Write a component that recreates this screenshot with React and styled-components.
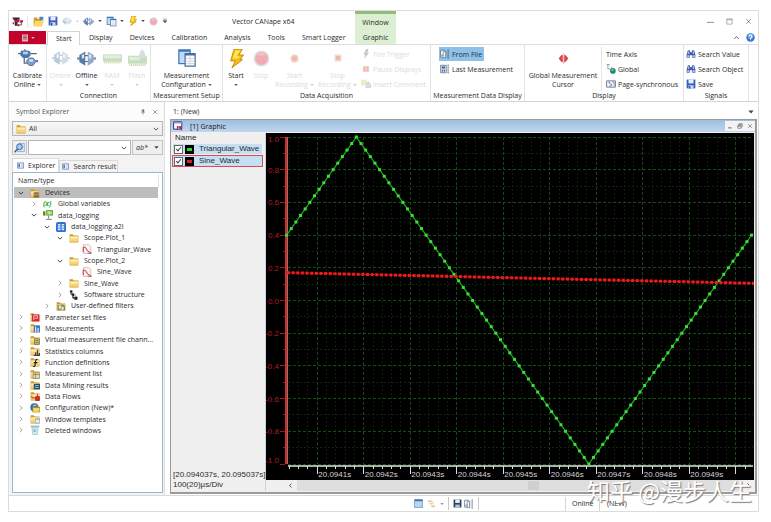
import React, { useLayoutEffect, useRef, useState } from 'react';
import styled, { createGlobalStyle, css } from 'styled-components';

const UI = '"Open Sans", "Noto Sans", sans-serif';
const ARIAL = '"Liberation Sans", Arial, sans-serif';

const Global = createGlobalStyle`
  *, *::before, *::after { box-sizing: border-box; }
  body { margin: 0; background: #fff; color: #2b2b2b; font: 7px/9px ${UI}; }
  button, input, select { font: inherit; color: inherit; margin: 0; padding: 0; border: 0; background: none; }
  ul { list-style: none; margin: 0; padding: 0; }
`;

/* ---------- icons ---------- */

const folder = (
  <>
    <path d="M1 2h5l1.500 2H15v11H1z" fill="#c99a2e" />
    <path d="M1.500 5h13v9h-13z" fill="#f9d373" />
    <path d="M2 6h12v3H2z" fill="#fdeeb4" />
  </>
);
const plug = (
  <>
    <path d="M0 7h3v2H0zM13 7h3v2h-3z" fill="#8c9aa8" />
    <path d="M2 5l5-3v12l-5-3z" fill="#5579ab" />
    <path d="M9 2l5 3v6l-5 3z" fill="#8fa9c9" />
    <path d="M4 5l2-1v4H4zM10 4l2 1v3h-2z" fill="#d5e3f3" />
    <path d="M7 5h2v1H7zM7 10h2v1H7z" fill="#555" />
  </>
);
const bolt = (
  <>
    <path d="M6 0h7l-3 5h4l-3 4h2L4 16l3-6H3z" fill="#f7bd12" stroke="#b98300" strokeWidth=".7" />
    <path d="M7 1.300h4L8 6h3L7.500 9.500 9 8H5z" fill="#ffe65a" />
  </>
);
const floppy = (
  <>
    <path d="M1 1h14v14H1z" fill="#3a5fc0" />
    <path d="M4 1h8v6H4z" fill="#e8effa" />
    <path d="M4 10h8v5H4z" fill="#cfd9ee" />
    <path d="M5 11h2v4H5z" fill="#1d3f88" />
  </>
);
const sheets = (
  <>
    <path d="M1 1h10v12H1z" fill="#3d77bd" />
    <path d="M2 3h8v9H2z" fill="#c3dcf6" />
    <path d="M6 4h9v11H6z" fill="#456b9a" />
    <path d="M7 6h7v8H7z" fill="#fff" />
    <path d="M7 8.300h7M7 10.500h7M7 12.500h7M10.500 6v8" stroke="#c1d0e2" strokeWidth=".7" />
  </>
);
const binoc = (
  <>
    <path d="M1 9l2-7h3l1 3h2l1-3h3l2 7v5h-5v-4H6v4H1z" fill="#3f5fae" />
    <path d="M2 10h3v3H2zM11 10h3v3h-3zM4 3h1v5H3zM11 3h1l1 5h-2z" fill="#b8ccf2" />
  </>
);
const picture = (
  <>
    <path d="M1 2h14v12H1z" fill="#fff" stroke="#355a9a" strokeWidth="1.400" />
    <path d="M3 4h4v8H3z" fill="#4d7cc4" />
    <path d="M9 5h4M9 8h4M9 11h4" stroke="#7b8cab" />
  </>
);
const fileCompare = (
  <>
    <path d="M1 2h6l2 2v9H1z" fill="#fff" stroke="#3b4d66" />
    <path d="M5 4h4v10H5z" fill="#f3f7ff" stroke="#3f6db4" />
    <path d="M13 1v14" stroke="#333" strokeDasharray="2 1" strokeWidth="1.400" />
    <path d="M2 9h4v2H2z" fill="#dc8b2e" />
  </>
);
const overlay = (extra) => (
  <>
    {folder}
    {extra}
  </>
);

const ICONS = {
  folder,
  plug,
  bolt,
  floppy,
  sheets,
  binoc,
  picture,
  fileCompare,
  logo: (
    <>
      <path d="M1 2h10v3H8v9H4V5H1z" fill="#1f2d3a" />
      <path d="M2 3l5 3 4-2v4l-4 2-4-3z" fill="#c4122f" />
      <path d="M8 12h3v3H8zM12 6h4v3h-4zM1 9h2v3H1z" fill="#c4122f" />
      <path d="M11 9h3v4h-3" fill="none" stroke="#1f2d3a" />
    </>
  ),
  openFolder: (
    <>
      <path d="M1 2h5l1 2h6v11H1z" fill="#d39d2c" />
      <path d="M3 7h13l-3 8H1z" fill="#ffd768" />
      <path d="M9 1h6v6l-2-2-3 2z" fill="#4c87c7" />
    </>
  ),
  calibrate: (
    <>
      <path d="M0 4h3v1H0zM10 4h5v1h-5zM5 1h1v3H5z" fill="#5d6670" />
      <path d="M3 2h5l2 1v3L8 8H4L2 6V3z" fill="#4e78ad" />
      <path d="M4 3h4v2H4z" fill="#b4cdea" />
      <path d="M5 8v4h2" fill="none" stroke="#5d6670" />
      <path d="M7 10l2-2h3l2 2h2v1h-2l-2 3H9l-2-2z" fill="#7d9cc6" stroke="#3f5e88" strokeWidth=".6" />
      <path d="M9 9h3v2H9z" fill="#d3e3f4" />
    </>
  ),
  board: (
    <>
      <path d="M0 3h16v9H0z" fill="#73ae5f" />
      <path d="M1 4h14v4H1z" fill="#b4d8a4" />
      <path d="M1 13h14" stroke="#a69845" strokeWidth="2" strokeDasharray="1 .6" />
    </>
  ),
  flash: (
    <>
      <path d="M0 6h16v7H0z" fill="#73ae5f" />
      <path d="M1 7h9v3H1z" fill="#b4d8a4" />
      <path d="M1 14h14" stroke="#a69845" strokeWidth="2" strokeDasharray="1 .6" />
      <path d="M9 8l1-5 2-3 2 3 1 5z" fill="#a3abb0" />
    </>
  ),
  stopOct: (
    <>
      <circle cx="8" cy="8" r="7.500" fill="#aab1bb" />
      <circle cx="8" cy="8" r="6" fill="#db3043" />
      <path d="M4 5a5 5 0 0 1 8 0z" fill="#ee7884" />
    </>
  ),
  record: (
    <>
      <circle cx="8" cy="8" r="7" fill="#eb8264" />
      <circle cx="8" cy="8" r="4" fill="#d94c34" />
    </>
  ),
  recStop: (
    <>
      <path d="M1 1h14v14H1z" fill="#eb9c8a" />
      <path d="M4 4h8v8H4z" fill="#d95138" />
    </>
  ),
  pause: <path d="M4 4h3v8H4zM9 4h3v8H9z" fill="#d95138" stroke="#d95138" />,
  smallBolt: <path d="M8 0h4l-2 6h3L5 16l2-7H4z" fill="#777" />,
  comment: (
    <>
      <path d="M0 1h9v8H5l-3 3V9H0z" fill="#d3d257" />
      <path d="M7 7h9v7H7zM10 4h3v3h-3z" fill="#7f91b3" />
      <path d="M8 10h7" stroke="#fff" />
    </>
  ),
  cursorLR: (
    <>
      <path d="M7 2v12L4 12 1 8l3-4zM9 2v12l3-2 3-4-3-4z" fill="#d9484a" />
      <path d="M8 0v16" stroke="#f2b8b8" strokeWidth="1.200" />
    </>
  ),
  globalAxis: (
    <>
      <path d="M1 1h5M3 1v7h4M9 5v4" stroke="#666" fill="none" />
      <circle cx="11" cy="11" r="4.500" fill="#1e8a70" />
      <path d="M8.500 9q2-2 4 0l-1 2h-2z" fill="#73ceb3" />
    </>
  ),
  pageSync: (
    <>
      <path d="M1 3h14v10H1z" fill="#fff" stroke="#4c5c86" strokeWidth="1.300" />
      <path d="M3 5h3v3h3v3H5M10 5h3v6" fill="none" stroke="#4c5c86" />
    </>
  ),
  lastMeas: (
    <>
      <path d="M1 2h9v12H1z" fill="#dbe7f7" stroke="#3b4d66" />
      <path d="M3 4h5v3H3zM3 9h2v3H3zM6 9h2v3H6z" fill="#3f5f92" />
      <path d="M13 1v14" stroke="#333" strokeDasharray="2 1" strokeWidth="1.400" />
    </>
  ),
  help: (
    <>
      <circle cx="8" cy="8" r="7.500" fill="#3271d0" />
      <circle cx="8" cy="6" r="5" fill="#6ba2ee" />
      <path d="M5.500 6a2.500 2.500 0 1 1 3.500 2.300Q8 8.800 8 10M8 11.500v1.500" stroke="#fff" strokeWidth="1.800" fill="none" />
    </>
  ),
  menuDoc: (
    <>
      <path d="M2 1h12v14H2z" fill="#e3b4ba" />
      <path d="M4 4h8M4 7h8M4 10h8" stroke="#8c1d30" strokeWidth="1.300" />
    </>
  ),
  pin: <path d="M5 2h6M6 2v6M10 2v6M9 2v6M3 8.500h10M8 9v6" stroke="#444" strokeWidth="1.400" fill="none" />,
  close: <path d="M3 3l10 10M13 3L3 13" stroke="#555" strokeWidth="1.500" />,
  min: <path d="M0 10h16" stroke="#777" strokeWidth="1.800" />,
  max: <path d="M2 2h12v12H2zM2 4h12" stroke="#777" strokeWidth="1.300" fill="none" />,
  restore: <path d="M2 7h9v7H2zM5 7V2h9v8h-3M5 3.500h9M2 8.500h9" stroke="#555" strokeWidth="1.500" fill="none" />,
  mdiMin: <path d="M3 13h9" stroke="#444" strokeWidth="2.200" />,
  up: <path d="M3 11l5-5 5 5" stroke="#444" strokeWidth="2" fill="none" />,
  down: <path d="M2 5l6 6 6-6" stroke="currentColor" strokeWidth="2.400" fill="none" />,
  right: <path d="M5 2l6 6-6 6" stroke="currentColor" strokeWidth="2.400" fill="none" />,
  left: <path d="M11 2L5 8l6 6" stroke="#222" strokeWidth="2.500" fill="none" />,
  caret: <path d="M1 4h14l-7 8z" fill="currentColor" />,
  qatMore: <path d="M3 3h10M3 7h10l-5 6z" stroke="#555" strokeWidth="1.500" fill="#555" />,
  search: (
    <>
      <path d="M7 2h8v12H5z" fill="#dde7f5" stroke="#7f95b5" />
      <circle cx="8" cy="7" r="4.200" fill="#a9cdf2" stroke="#35659f" strokeWidth="1.400" />
      <path d="M5 10l-4 5" stroke="#35659f" strokeWidth="2.200" />
    </>
  ),
  devices: overlay(
    <>
      <path d="M6 7h8v8H6z" fill="#6b5a22" />
      <path d="M4 10h12M8 9v5M11 9v5" stroke="#d8c27a" />
    </>
  ),
  monitor: (
    <>
      <path d="M5 0h11v9H5z" fill="#6fae3c" />
      <path d="M7 2h7v5H7z" fill="#c2e59b" />
      <path d="M0 2h4v7H0z" fill="#5c9033" />
      <path d="M9 9v5M5 15h9" stroke="#777" strokeWidth="1.500" />
    </>
  ),
  a2l: (
    <>
      <rect x="0" y="0" width="16" height="16" rx="3" fill="#2f6fd0" />
      <path d="M3 3h4v10H3zM9 3h4v10H9z" fill="#dceaff" />
      <path d="M3 6h4M3 10h4M9 6h4M9 10h4" stroke="#2f6fd0" />
    </>
  ),
  signal: (
    <>
      <path d="M2 1h9l3 3v11H2z" fill="#fbf1f1" stroke="#c9a1a1" />
      <path d="M2 13V5q4-1 5 3t7 6" stroke="#d9303b" strokeWidth="1.600" fill="none" />
      <path d="M9 14h7v1.500H9z" fill="#777" />
    </>
  ),
  structure: <path d="M2 1h3v3H2zM5 6h3v3H5zM9 11h4v4H9zM3 5v2h3M6 9v4h3M9 8h2" fill="#222" stroke="#222" />,
  filters: overlay(
    <>
      <path d="M2 6h12v9H2z" fill="#9a9d55" />
      <path d="M5 7h3v5H5zM9 9h4v5H9z" fill="#e9ecd2" />
      <path d="M9 5l4 4v6" stroke="#444" fill="none" />
    </>
  ),
  param: overlay(
    <>
      <path d="M3 4h12v11H3z" fill="#d9272e" />
      <path d="M6 13V6h6v4H7" stroke="#ffdede" strokeWidth="1.300" fill="none" />
    </>
  ),
  measure: overlay(
    <>
      <path d="M6 4h10v11H6z" fill="#3d74c5" />
      <path d="M8 6h2v9H8zM12 8h2v7h-2z" fill="#dbe8fb" />
    </>
  ),
  virtual: overlay(<path d="M7 6h8v9H7zM9 9h4M9 12h4" fill="#c8bf6a" stroke="#5d582a" />),
  stats: overlay(<path d="M9 14v-4M12 14V6M15 14v-3M6 15h10" stroke="#444" strokeWidth="2" />),
  func: overlay(<path d="M12 4q-3-1-3 3l-1 6q0 3-3 2M6 9h6" stroke="#222" strokeWidth="1.800" fill="none" />),
  list: overlay(<path d="M5 6h10v9H5zM5 9h10M9 6v9" fill="#e7e2b8" stroke="#77713c" />),
  mining: overlay(
    <>
      <path d="M6 6h10v9H6z" fill="#2c4c67" />
      <path d="M8 9h6M8 12h6" stroke="#a9d4ef" strokeWidth="1.300" />
    </>
  ),
  flows: overlay(<path d="M9 9h6v6H9zM3 11h5M12 5v4M3 7v4" fill="#d92c2c" stroke="#b11b1b" strokeWidth="1.300" />),
  config: (
    <>
      <circle cx="7" cy="7" r="6.500" fill="#3e6cb0" />
      <path d="M4 6h12v9H4z" fill="#b08f20" />
      <path d="M5 8h10v6H5z" fill="#f5d765" />
      <path d="M5 3h5v2H5z" fill="#bcd3f3" />
    </>
  ),
  templates: overlay(
    <>
      <path d="M8 7h8v8H8z" fill="#8ba5bd" />
      <path d="M9 9h6v5H9z" fill="#e6eff7" />
    </>
  ),
  trash: (
    <>
      <path d="M2 3h12l-2 13H4z" fill="#a9cfd8" />
      <path d="M4 5h8l-1 9H5z" fill="#dbf0f3" />
      <path d="M1 1h14v2H1z" fill="#8fb7c2" />
      <path d="M6 8l2-1 2 2-2 2-2-1z" stroke="#3b91a8" fill="none" />
    </>
  ),
  graphWin: (
    <>
      <path d="M1 1h13v12H1z" fill="#fff" stroke="#2b3480" strokeWidth="1.600" />
      <path d="M1 1h13v3H1z" fill="#8b97d8" />
      <path d="M7 14V8l4 4V8l3 7" stroke="#b5123a" strokeWidth="1.600" fill="none" />
    </>
  ),
  statusWin: (
    <>
      <path d="M1 1h14v14H1z" fill="#b8d6f2" stroke="#3d75ad" />
      <path d="M1 1h14v3H1z" fill="#3d75ad" />
    </>
  ),
  statusFlow: <path d="M2 3h6v2H2zM5 8h6v1H5zM8 12h6v2H8zM11 3v4" fill="#f0cfa8" stroke="#e6bd90" />,
  floppyDark: (
    <>
      <path d="M1 1h14v14H1z" fill="#2d4560" />
      <path d="M4 1h8v6H4z" fill="#e8effa" />
      <path d="M4 10h8v5H4z" fill="#b9c8d8" />
    </>
  ),
};

const Svg = styled.svg`
  flex: none;
  display: block;
  width: ${(p) => p.$s || 9}px;
  height: ${(p) => p.$h || p.$s || 9}px;
  opacity: ${(p) => (p.$dim ? 0.4 : 1)};
  color: ${(p) => p.$c || '#444'};
`;
const Icon = ({ n, s, h, dim, c }) => (
  <Svg viewBox="0 0 16 16" preserveAspectRatio={h ? 'none' : undefined} $s={s} $h={h} $dim={dim} $c={c} aria-hidden="true">
    {ICONS[n]}
  </Svg>
);

/* ---------- window frame ---------- */

const Page = styled.div`
  display: flex;
  min-height: 100vh;
  padding: 10px 12px 10px 8px;
`;
const AppWindow = styled.div`
  position: relative;
  flex: 1;
  min-width: 0;
  display: flex;
  flex-direction: column;
  border: 1px solid #dcdcdc;
  background: #fff;
`;
const Header = styled.header`
  display: grid;
  grid-template-columns: 346px 41px 1fr;
  grid-template-rows: 20px 14px;
`;
const TitleBar = styled.div`
  display: flex;
  align-items: center;
`;
const QuickAccess = styled.div`
  display: flex;
  align-items: center;
  gap: 4px;
  width: 223px;
  padding-left: 3px;
`;
const IconButton = styled.button`
  display: flex;
  align-items: center;
  gap: ${(p) => p.$gap || 0}px;
`;
const QuickSep = styled.span`
  width: 1px;
  height: 11px;
  margin-right: 1px;
  background: #e2e2e2;
`;
const AppTitle = styled.h1`
  margin: 0;
  font: 7px/9px ${UI};
`;
const ContextTitle = styled.div`
  display: flex;
  align-items: center;
  justify-content: center;
  background: #dcefd2;
  border-top: 3px solid #91bd7b;
  line-height: 13px;
`;
const Controls = styled.div`
  display: flex;
  align-items: center;
  justify-content: flex-end;
  gap: ${(p) => p.$gap}px;
  padding-right: ${(p) => p.$pad}px;
`;
const Tabs = styled.nav`
  display: flex;
  gap: 1px;
  border-bottom: 1px solid #dedede;
`;
const FileTab = styled.button`
  display: flex;
  align-items: center;
  justify-content: center;
  gap: 2px;
  width: 37px;
  background: #c1022b;
`;
const Tab = styled.button`
  padding: 0 8px;
  ${(p) =>
    p.$active &&
    css`
      width: 33px;
      margin-bottom: -1px;
      border: 1px solid #d4d4d4;
      border-width: 1px 1px 0;
      background: #fff;
    `}
`;
const ContextTab = styled.button`
  background: #dcefd2;
  border-bottom: 1px solid #dedede;
`;
const TabTail = styled(Controls)`
  border-bottom: 1px solid #dedede;
`;

/* ---------- ribbon ---------- */

const Ribbon = styled.div`
  display: flex;
  height: 57px;
  border-bottom: 1px solid #d4d4d4;
`;
const Group = styled.section`
  flex: none;
  display: flex;
  flex-direction: column;
  width: ${(p) => p.$w}px;
  border-right: 1px solid #e3e3e3;
`;
const GroupBody = styled.div`
  height: 46px;
  padding-top: 2px;
  display: flex;
  align-items: flex-start;
  justify-content: ${(p) => (p.$start ? 'flex-start' : 'center')};
  padding-left: ${(p) => p.$pad || 0}px;
`;
const GroupLabel = styled.div`
  height: 10px;
  text-align: center;
  white-space: nowrap;
`;
const BigButton = styled.button`
  flex: none;
  display: flex;
  flex-direction: column;
  align-items: center;
  width: ${(p) => p.$w}px;
  white-space: nowrap;
  color: ${(p) => (p.disabled ? '#dcdcdc' : 'inherit')};
`;
const BigIcon = styled.span`
  display: flex;
  align-items: center;
  height: 22px;
  margin-bottom: 2px;
`;
const Line = styled.span`
  display: flex;
  align-items: center;
  gap: 2px;
  height: 9px;
`;
const SmallColumn = styled.div`
  display: flex;
  flex-direction: column;
  align-items: flex-start;
  gap: 1px;
  height: 44px;
  margin-left: ${(p) => p.$ml || 0}px;
  padding-left: ${(p) => (p.$divider ? 3 : 0)}px;
  border-left: ${(p) => (p.$divider ? '1px solid #e6e6e6' : '0')};
`;
const SmallButton = styled.button`
  display: flex;
  align-items: center;
  gap: ${(p) => p.$gap || 2}px;
  height: 14px;
  padding: 0 2px 0 1px;
  white-space: nowrap;
  color: ${(p) => (p.disabled ? '#dcdcdc' : 'inherit')};
  background: ${(p) => (p.$active ? '#8fc0e8' : 'none')};
`;

function Big({ w, icon, size = 20, h, lines, caret, inlineCaret, disabled }) {
  const c = disabled ? '#c8c8c8' : '#555';
  return (
    <BigButton $w={w} disabled={disabled}>
      <BigIcon>
        <Icon n={icon} s={size} h={h} dim={disabled} />
      </BigIcon>
      {lines.map((t, i) => (
        <Line key={t}>
          {t}
          {inlineCaret && i === lines.length - 1 && <Icon n="caret" s={4} c={c} />}
        </Line>
      ))}
      {caret && (
        <Line>
          <Icon n="caret" s={4} c={c} />
        </Line>
      )}
    </BigButton>
  );
}
const Small = ({ icon, children, disabled, active }) => (
  <SmallButton disabled={disabled} $active={active}>
    {icon && <Icon n={icon} s={10} dim={disabled} />}
    {children}
  </SmallButton>
);

/* ---------- symbol explorer ---------- */

const Main = styled.main`
  flex: 1;
  min-height: 0;
  display: flex;
  gap: 5px;
  padding-right: 1px;
`;
const Explorer = styled.aside`
  flex: none;
  display: flex;
  flex-direction: column;
  width: 156px;
  padding: 0 1px 2px 3px;
  background: #f3f3f3;
  border-right: 1px solid #e0e0e0;
`;
const PanelTitle = styled.div`
  display: flex;
  align-items: center;
  gap: 6px;
  height: 19px;
  margin-left: -3px;
  padding: 0 5px 0 7px;
  color: #555;
  background: #fcfcfc;
`;
const Grow = styled.span`
  flex: 1;
`;
const Combo = styled.div`
  display: flex;
  align-items: center;
  gap: 3px;
  height: 15px;
  padding: 0 3px;
  border: 1px solid #b5b5b5;
  background: linear-gradient(#f7f7f7, #ececec);
`;
const Select = styled.select`
  flex: 1;
  min-width: 0;
  appearance: none;
  outline: 0;
`;
const SearchRow = styled.div`
  display: flex;
  gap: 1px;
  margin: 4px 0 3px;
`;
const ToolButton = styled.button`
  display: flex;
  align-items: center;
  justify-content: center;
  gap: 6px;
  width: ${(p) => p.$w}px;
  border: 1px solid #c3c3c3;
  background: #efefef;
  font-style: italic;
`;
const SearchBox = styled.label`
  flex: 1;
  min-width: 0;
  display: flex;
  align-items: center;
  height: 15px;
  padding-right: 3px;
  border: 1px solid #b5b5b5;
  background: #fff;
`;
const SearchInput = styled.input`
  flex: 1;
  min-width: 0;
  outline: 0;
`;
const SubTabs = styled.div`
  display: flex;
  align-items: flex-end;
`;
const SubTab = styled.button`
  display: flex;
  align-items: center;
  gap: 4px;
  height: ${(p) => (p.$active ? 14 : 12)}px;
  padding: 0 ${(p) => (p.$active ? 3 : 1)}px 0 ${(p) => (p.$active ? 4 : 2)}px;
  border: 1px solid #d9d9d9;
  border-bottom: 0;
  background: ${(p) => (p.$active ? '#fff' : '#f3f3f3')};
`;
const TreePanel = styled.div`
  flex: 1;
  padding: 1px;
  border: 1px solid #9fb4c7;
  background: #fff;
`;
const TreeHead = styled.div`
  width: 145px;
  height: 13px;
  padding: 2px 4px;
  border-right: 1px solid #e3e3e3;
`;
const Tree = styled.ul`
  display: grid;
  grid-auto-rows: 1fr;
  width: 144px;
  height: 249px;
`;
const Node = styled.li`
  display: flex;
  align-items: center;
  padding-left: ${(p) => 4 + p.$level * 13}px;
  white-space: nowrap;
  background: ${(p) => (p.$selected ? '#bdbdbd' : 'none')};
`;
const Expander = styled.button`
  display: flex;
  width: 9px;
  height: 9px;
  align-items: center;
`;
const NodeIcon = styled.span`
  display: flex;
  width: 14px;
  margin-right: 4px;
  padding-left: 3px;
`;
const VarGlyph = styled.span`
  color: #2ea32e;
  font-style: italic;
  font-weight: 700;
`;

const TREE = [
  [0, 'down', 'devices', 'Devices'],
  [1, 'right', 'var', 'Global variables'],
  [1, 'down', 'monitor', 'data_logging'],
  [2, 'down', 'a2l', 'data_logging.a2l'],
  [3, 'down', 'folder', 'Scope.Plot_1'],
  [4, '', 'signal', 'Triangular_Wave'],
  [3, 'down', 'folder', 'Scope.Plot_2'],
  [4, '', 'signal', 'Sine_Wave'],
  [3, 'right', 'folder', 'Sine_Wave'],
  [3, 'right', 'structure', 'Software structure'],
  [2, 'right', 'filters', 'User-defined filters'],
  [0, 'right', 'param', 'Parameter set files'],
  [0, 'right', 'measure', 'Measurements'],
  [0, 'right', 'virtual', 'Virtual measurement file chann...'],
  [0, 'right', 'stats', 'Statistics columns'],
  [0, 'right', 'func', 'Function definitions'],
  [0, 'right', 'list', 'Measurement list'],
  [0, 'right', 'mining', 'Data Mining results'],
  [0, 'right', 'flows', 'Data Flows'],
  [0, 'right', 'config', 'Configuration (New)*'],
  [0, 'right', 'templates', 'Window templates'],
  [0, 'right', 'trash', 'Deleted windows'],
];

function SymbolExplorer() {
  return (
    <Explorer>
      <PanelTitle>
        Symbol Explorer
        <Grow />
        <IconButton aria-label="Pin"><Icon n="pin" s={6} /></IconButton>
        <IconButton aria-label="Close panel"><Icon n="close" s={6} /></IconButton>
      </PanelTitle>
      <Combo>
        <Icon n="folder" s={10} />
        <Select aria-label="Filter" defaultValue="All"><option>All</option></Select>
        <Icon n="down" s={6} />
      </Combo>
      <SearchRow>
        <ToolButton $w={15} aria-label="Search"><Icon n="search" s={11} /></ToolButton>
        <SearchBox>
          <SearchInput aria-label="Search text" />
          <Icon n="down" s={6} />
        </SearchBox>
        <ToolButton $w={31}>ab* <Icon n="caret" s={5} /></ToolButton>
      </SearchRow>
      <SubTabs>
        <SubTab $active><Icon n="picture" s={7} />Explorer</SubTab>
        <SubTab><Icon n="picture" s={7} />Search result</SubTab>
      </SubTabs>
      <TreePanel>
        <TreeHead>Name/type</TreeHead>
        <Tree role="tree">
          {TREE.map(([level, state, icon, name], i) => (
            <Node key={i} role="treeitem" $level={level} $selected={i === 0}>
              <Expander aria-label={`Expand ${name}`}>
                {state && <Icon n={state} s={6} c={state === 'down' ? '#333' : '#999'} />}
              </Expander>
              <NodeIcon>{icon === 'var' ? <VarGlyph>(x)</VarGlyph> : <Icon n={icon} s={10} />}</NodeIcon>
              {name}
            </Node>
          ))}
        </Tree>
      </TreePanel>
    </Explorer>
  );
}

/* ---------- graphic window ---------- */

const Workspace = styled.div`
  flex: 1;
  min-width: 0;
  display: flex;
  flex-direction: column;
  padding-bottom: 1px;
`;
const PageTab = styled.div`
  display: flex;
  align-items: center;
  justify-content: space-between;
  height: 17px;
  padding: 2px 3px 0 3px;
`;
const GraphWindow = styled.section`
  flex: 1;
  display: flex;
  flex-direction: column;
  border: 1px solid #9b9b9b;
  border-width: 1px 2px 2px 1px;
  background: #f0f0f0;
  font: 8px/10px ${ARIAL};
`;
const GraphTitle = styled.div`
  display: flex;
  align-items: center;
  gap: 7px;
  height: 12px;
  padding: 1px 0 1px 2px;
  background: linear-gradient(#9dbfdf, #c0d6ec);
  font: 7px/9px ${UI};
  color: #112;
`;
const MdiControls = styled.div`
  display: flex;
  align-items: center;
  justify-content: space-around;
  width: 30px;
  height: 10px;
  background: #f3f3f3;
`;
const GraphBody = styled.div`
  flex: 1;
  min-height: 0;
  display: flex;
  padding: 1px 1px 1px 0;
`;
const Legend = styled.div`
  flex: none;
  display: flex;
  flex-direction: column;
  width: 95px;
  padding: 0 2px 0 1px;
  border-right: 1px solid #c9d3dc;
`;
const LegendHead = styled.div`
  height: 10px;
  padding-left: 3px;
  line-height: 9px;
`;
const LegendRow = styled.label`
  display: flex;
  align-items: center;
  gap: 2px;
  height: 12px;
  padding-left: 1px;
  border: 1px solid ${(p) => (p.$selected ? '#dc4a58' : 'transparent')};
  background: #c6dff3;
  background-clip: padding-box;
`;
const Check = styled.input`
  appearance: none;
  width: 9px;
  height: 9px;
  flex: none;
  border: 1px solid #666;
  background: #fff;
  position: relative;
  &:checked::after {
    content: '';
    position: absolute;
    left: 2px;
    top: 0;
    width: 3px;
    height: 5px;
    border: solid #444;
    border-width: 0 1px 1px 0;
    transform: rotate(40deg);
  }
`;
const Swatch = styled.span`
  display: grid;
  place-items: center;
  width: 9px;
  height: 9px;
  margin-right: 3px;
  background: #000;
  &::after {
    content: '';
    width: 5px;
    height: 3px;
    background: ${(p) => p.$c};
  }
`;
const RangeText = styled.div`
  white-space: nowrap;
  margin: auto -2px 0 0;
  padding: 0 0 1px 1px;
`;
const Plot = styled.div`
  flex: 1;
  min-width: 0;
  display: flex;
  flex-direction: column;
`;
const ChartArea = styled.div`
  flex: 1;
  min-height: 0;
  overflow: hidden;
  background: #000;
  contain: size;
`;
const ChartSvg = styled.svg`
  display: block;
  width: 100%;
  height: 100%;
  font: 8px ${ARIAL};
`;
const ScrollBar = styled.div`
  display: grid;
  grid-template-columns: 31px 231px 11px 1fr 12px;
  align-items: center;
  justify-items: center;
  height: 11px;
  background: #dedede;
`;
const ScrollEnd = styled.button`
  display: grid;
  place-items: center;
  width: 100%;
  height: 11px;
  padding-left: ${(p) => p.$pad || 0}px;
  background: #f0f0f0;
`;
const ScrollThumb = styled.span`
  grid-column: 3;
  width: 100%;
  height: 9px;
  background: #cfcfcf;
`;

const range = (a, b) => Array.from({ length: b - a + 1 }, (_, i) => a + i);

function Chart() {
  const ref = useRef(null);
  const [size, setSize] = useState({ w: 488, h: 347 });
  useLayoutEffect(() => {
    const read = () => {
      const r = ref.current.getBoundingClientRect();
      setSize({ w: r.width, h: r.height });
    };
    read();
    const ob = new ResizeObserver(read);
    ob.observe(ref.current);
    return () => ob.disconnect();
  }, []);

  const left = 22;
  const right = size.w - 1;
  const top = 4;
  const bottom = size.h - 16;
  const toX = (us) => left + ((us - 37) / 1000) * (right - left);
  const toY = (v) => top + ((1 - v) / 2) * (bottom - top);
  const px = (n) => Math.floor(n) + 0.5;

  const tri = range(0, 100).map((i) => {
    const k = Math.abs(i - 15);
    return [toX(34 + i * 10), toY(k <= 50 ? 1 - 0.04 * k : -1 + 0.04 * (k - 50))];
  });
  const sine = range(0, 100).map((i) => [toX(38 + i * 10), toY(0.17 - 0.00065 * i)]);
  const path = (pts) => pts.map((p) => p.join(',')).join(' ');

  return (
    <ChartArea ref={ref}>
      <ChartSvg role="img" aria-label="Triangular_Wave and Sine_Wave over time">
        {range(2, 51).map((i) => {
          const x = px(toX(i * 20));
          const major = i % 5 === 0;
          return (
            <line key={i} x1={x} x2={x} y1={top} y2={bottom} stroke={major ? '#144a14' : '#092009'} strokeDasharray={major ? '3 2' : '2 2'} />
          );
        })}
        {range(-10, 10).map((i) => {
          const y = px(toY(i / 10));
          const major = i % 2 === 0;
          return (
            <line key={i} x1={left} x2={right} y1={y} y2={y} stroke={major ? '#144e14' : '#0b260b'} strokeDasharray={major ? '3 2' : '2 2'} />
          );
        })}
        <path d={`M20 ${top}V${bottom}`} stroke="#e0202a" strokeWidth="2" />
        <path d={`M21.500 ${top}V${bottom}`} stroke="#7c7c68" />
        {range(-10, 10).map((i) => {
          const y = px(toY(i / 10));
          return <line key={i} x1={i % 2 ? 17 : 14} x2={19} y1={y} y2={y} stroke="#a8141c" />;
        })}
        {range(-5, 5).map((i) => (
          <text key={i} x="13" y={toY(i / 5) + (i === 5 ? 5 : i === -5 ? -1 : 3)} textAnchor="end" fill="#b81a22">
            {(i / 5).toFixed(1)}
          </text>
        ))}
        <line x1={left} x2={right} y1={bottom + 2} y2={bottom + 2} stroke="#e6e6e6" strokeWidth="1.500" />
        {range(2, 51).map((i) => {
          const x = px(toX(i * 20));
          return <line key={i} x1={x} x2={x} y1={bottom + 2} y2={bottom + (i % 5 ? 5 : 10)} stroke="#ddd" />;
        })}
        {range(1, 9).map((i) => (
          <text key={i} x={toX(i * 100) + 1} y={bottom + 13} fill="#d4d4d4">
            {`20.094${i}s`}
          </text>
        ))}
        <polyline points={path(tri)} fill="none" stroke="#1fa81f" strokeWidth="1.200" />
        {tri.map(([x, y], i) => (
          <rect key={i} x={x - 1.5} y={y - 1.5} width="3" height="3" fill="#3be03b" />
        ))}
        <polyline points={path(sine)} fill="none" stroke="#a81010" />
        {sine.map(([x, y], i) => (
          <rect key={i} x={x - 1.5} y={y - 1.5} width="3" height="3" fill="#f01c1c" />
        ))}
      </ChartSvg>
    </ChartArea>
  );
}

/* ---------- status bar ---------- */

const StatusBar = styled.footer`
  display: flex;
  align-items: center;
  height: 16px;
  border-top: 1px solid #d9d9d9;
`;
const StatusTools = styled.div`
  display: flex;
  align-items: center;
  gap: ${(p) => p.$gap || 4}px;
  margin-left: auto;
  padding-right: 86px;
`;
const StatusPair = styled.div`
  display: flex;
  align-items: center;
  gap: 2px;
`;
const StatusSep = styled.span`
  width: 1px;
  height: 13px;
  background: #c9c9c9;
`;
const StatusText = styled.span`
  width: ${(p) => p.$w}px;
  padding-left: ${(p) => p.$pad}px;
  border-left: 1px solid #d5d5d5;
  line-height: 14px;
`;
const Watermark = styled.div`
  position: absolute;
  right: 6px;
  bottom: 5px;
  color: #fff;
  font: 23px/32px "Noto Sans CJK SC", sans-serif;
  white-space: nowrap;
  text-shadow: 1px 1px 1px #777;
  pointer-events: none;
`;

export default function App() {
  return (
    <Page>
      <Global />
      <AppWindow>
        <Header>
          <TitleBar>
            <QuickAccess>
              <Icon n="logo" s={11} />
              <QuickSep />
              <IconButton aria-label="Open"><Icon n="openFolder" s={11} /></IconButton>
              <IconButton aria-label="Save"><Icon n="floppy" s={10} /></IconButton>
              <IconButton aria-label="Go online" disabled $gap={4}><Icon n="plug" s={10} dim /><Icon n="caret" s={3} c="#bbb" /></IconButton>
              <IconButton aria-label="Go offline" $gap={4}><Icon n="plug" s={11} /><Icon n="caret" s={4} /></IconButton>
              <IconButton aria-label="Measurement configuration" $gap={3}><Icon n="sheets" s={11} /><Icon n="caret" s={4} /></IconButton>
              <IconButton aria-label="Start" $gap={3}><Icon n="bolt" s={10} /><Icon n="caret" s={4} /></IconButton>
              <IconButton aria-label="Stop" disabled><Icon n="stopOct" s={9} dim /></IconButton>
              <IconButton aria-label="Customize"><Icon n="qatMore" s={6} /></IconButton>
            </QuickAccess>
            <AppTitle>Vector CANape x64</AppTitle>
          </TitleBar>
          <ContextTitle>Window</ContextTitle>
          <Controls $gap={12} $pad={6}>
            <IconButton aria-label="Minimize"><Icon n="min" s={7} /></IconButton>
            <IconButton aria-label="Maximize"><Icon n="max" s={7} /></IconButton>
            <IconButton aria-label="Close"><Icon n="close" s={7} /></IconButton>
          </Controls>
          <Tabs>
            <FileTab aria-label="File"><Icon n="menuDoc" s={8} /><Icon n="caret" s={4} c="#e7b5be" /></FileTab>
            <Tab $active>Start</Tab>
            {['Display', 'Devices', 'Calibration', 'Analysis', 'Tools', 'Smart Logger'].map((t) => (
              <Tab key={t}>{t}</Tab>
            ))}
          </Tabs>
          <ContextTab>Graphic</ContextTab>
          <TabTail $gap={6} $pad={3}>
            <IconButton aria-label="Collapse ribbon"><Icon n="up" s={7} /></IconButton>
            <IconButton aria-label="Help"><Icon n="help" s={9} /></IconButton>
          </TabTail>
        </Header>

        <Ribbon>
          <Group $w={38}>
            <GroupBody>
              <Big w={36} icon="calibrate" lines={['Calibrate', 'Online']} inlineCaret />
            </GroupBody>
          </Group>
          <Group $w={104}>
            <GroupBody>
              <Big w={26} icon="plug" size={18} lines={['Online']} caret disabled />
              <Big w={26} icon="plug" size={19} lines={['Offline']} caret />
              <Big w={25} icon="board" size={19} h={13} lines={['RAM']} caret disabled />
              <Big w={25} icon="flash" size={19} h={18} lines={['Flash']} caret disabled />
            </GroupBody>
            <GroupLabel>Connection</GroupLabel>
          </Group>
          <Group $w={72}>
            <GroupBody>
              <Big w={70} icon="sheets" lines={['Measurement', 'Configuration']} inlineCaret />
            </GroupBody>
            <GroupLabel>Measurement Setup</GroupLabel>
          </Group>
          <Group $w={208}>
            <GroupBody $start>
              <Big w={26} icon="bolt" size={19} lines={['Start']} caret />
              <Big w={24} icon="stopOct" size={17} lines={['Stop']} disabled />
              <Big w={43} icon="record" size={9} lines={['Start', 'Recording']} inlineCaret disabled />
              <Big w={43} icon="recStop" size={8} lines={['Stop', 'Recording']} inlineCaret disabled />
              <SmallColumn $ml={1}>
                <Small icon="smallBolt" disabled>Fire Trigger</Small>
                <Small icon="pause" disabled>Pause Displays</Small>
                <Small icon="comment" disabled>Insert Comment</Small>
              </SmallColumn>
            </GroupBody>
            <GroupLabel>Data Acquisition</GroupLabel>
          </Group>
          <Group $w={94}>
            <GroupBody $start $pad={8}>
              <SmallColumn>
                <Small icon="fileCompare" active>From File</Small>
                <Small icon="lastMeas">Last Measurement</Small>
              </SmallColumn>
            </GroupBody>
            <GroupLabel>Measurement Data Display</GroupLabel>
          </Group>
          <Group $w={159}>
            <GroupBody $start>
              <Big w={76} icon="cursorLR" size={11} lines={['Global Measurement', 'Cursor']} />
              <SmallColumn $divider>
                <Small>Time Axis</Small>
                <Small icon="globalAxis">Global</Small>
                <Small icon="pageSync">Page-synchronous</Small>
              </SmallColumn>
            </GroupBody>
            <GroupLabel>Display</GroupLabel>
          </Group>
          <Group $w={65}>
            <GroupBody $start $pad={1}>
              <SmallColumn>
                <Small icon="binoc">Search Value</Small>
                <Small icon="binoc">Search Object</Small>
                <Small icon="floppy">Save</Small>
              </SmallColumn>
            </GroupBody>
            <GroupLabel>Signals</GroupLabel>
          </Group>
        </Ribbon>

        <Main>
          <SymbolExplorer />
          <Workspace>
            <PageTab>
              1: (New)
              <IconButton aria-label="Pages"><Icon n="caret" s={6} /></IconButton>
            </PageTab>
            <GraphWindow>
              <GraphTitle>
                <Icon n="graphWin" s={10} />
                [1] Graphic
                <Grow />
                <MdiControls>
                  <IconButton aria-label="Minimize graphic"><Icon n="mdiMin" s={6} /></IconButton>
                  <IconButton aria-label="Restore graphic"><Icon n="restore" s={6} /></IconButton>
                  <IconButton aria-label="Close graphic"><Icon n="close" s={6} /></IconButton>
                </MdiControls>
              </GraphTitle>
              <GraphBody>
                <Legend>
                  <LegendHead>Name</LegendHead>
                  <LegendRow><Check type="checkbox" defaultChecked /><Swatch $c="#2edc2e" />Triangular_Wave</LegendRow>
                  <LegendRow $selected><Check type="checkbox" defaultChecked /><Swatch $c="#e01c24" />Sine_Wave</LegendRow>
                  <RangeText>[20.094037s, 20.095037s]<br />100(20)µs/Div</RangeText>
                </Legend>
                <Plot>
                  <Chart />
                  <ScrollBar>
                    <ScrollEnd $pad={18} aria-label="Scroll left"><Icon n="left" s={5} /></ScrollEnd>
                    <ScrollThumb />
                    <Grow />
                    <ScrollEnd aria-label="Scroll right"><Icon n="right" s={5} c="#222" /></ScrollEnd>
                  </ScrollBar>
                </Plot>
              </GraphBody>
            </GraphWindow>
          </Workspace>
        </Main>

        <StatusBar>
          <StatusTools>
            <Icon n="statusWin" s={9} />
            <Icon n="statusFlow" s={9} />
            <Icon n="caret" s={4} c="#999" />
            <StatusSep />
            <StatusPair>
              <Icon n="floppyDark" s={9} />
              <Icon n="fileCompare" s={10} />
            </StatusPair>
            <StatusSep />
          </StatusTools>
          <StatusText $w={34} $pad={6}>Online</StatusText>
          <StatusText $w={159} $pad={7}>(NEW)</StatusText>
        </StatusBar>
        <Watermark>知乎 @漫步人生</Watermark>
      </AppWindow>
    </Page>
  );
}
